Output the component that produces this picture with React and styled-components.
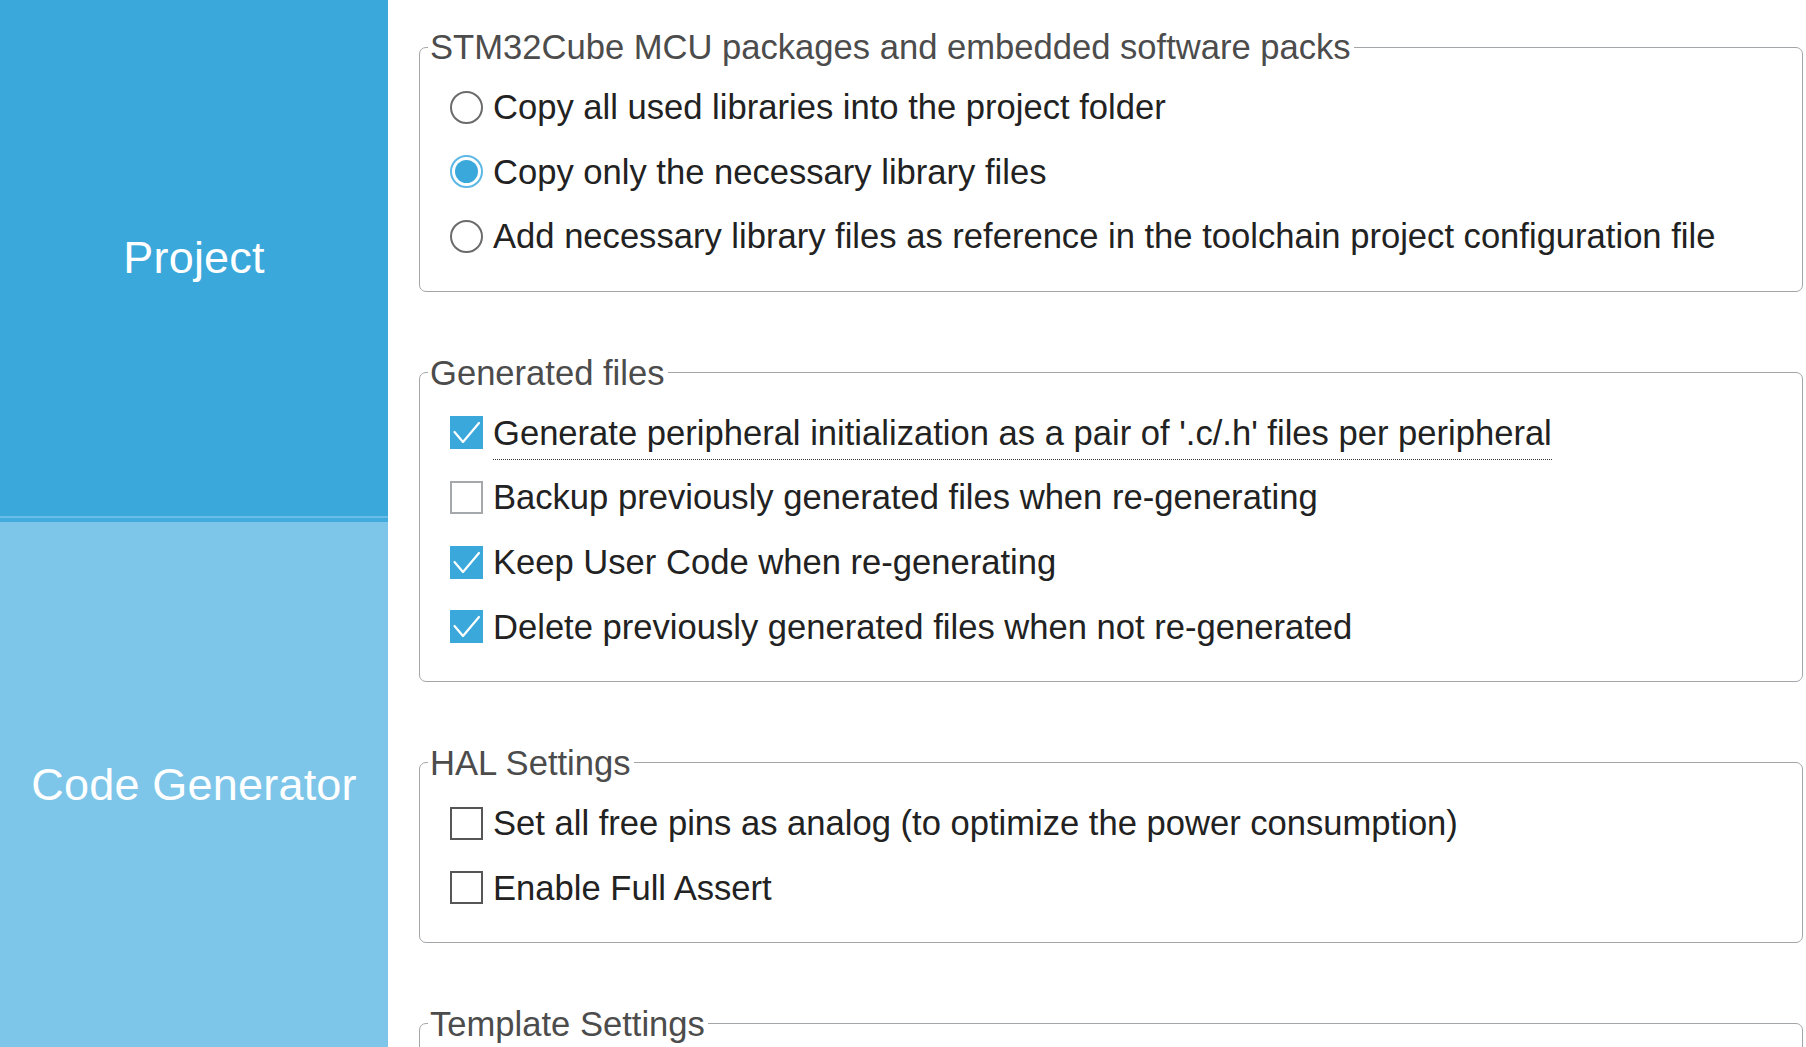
import React from "react";
import styled, { createGlobalStyle } from "styled-components";

const Global = createGlobalStyle`
  html, body { margin: 0; padding: 0; background: #fff; }
  body { font-family: "Liberation Sans", Arial, sans-serif; }
`;

const Page = styled.div`
  display: flex;
  width: 1806px;
  height: 1047px;
  overflow: hidden;
  background: #fff;
`;

const Sidebar = styled.nav`
  width: 388px;
  flex: 0 0 388px;
  display: flex;
  flex-direction: column;
  background: #7dc6ea;
`;

const Tile = styled.div`
  height: ${(p) => p.$h}px;
  flex: 0 0 auto;
  display: flex;
  align-items: center;
  justify-content: center;
  color: #fff;
  font-size: 45px;
  letter-spacing: 0.2px;
  box-sizing: border-box;
  padding-bottom: ${(p) => (p.$active ? 6 : 0)}px;
  background: ${(p) =>
    p.$active
      ? "linear-gradient(to bottom, #3aa8db 0 516px, #69bde6 516px 518px, #42abde 518px 522px)"
      : "#7dc6ea"};
`;

const Main = styled.main`
  flex: 1;
  padding: 27px 3px 0 31px;
  display: flex;
  flex-direction: column;
  gap: 60.8px;
  min-width: 0;
`;

const Group = styled.fieldset`
  margin: 0;
  border: 1.5px solid #a3a6a9;
  border-radius: 7px;
  padding: 8px 0 22px 0;
  min-width: 0;
`;

const Legend = styled.legend`
  margin-left: 8px;
  padding: 0 3px 0 2px;
  font-size: 34.6px;
  line-height: 40px;
  color: #4c4c4c;
`;

const Rows = styled.div`
  display: flex;
  flex-direction: column;
  padding-left: 30px;
`;

const Row = styled.label`
  display: flex;
  align-items: center;
  height: 64.6px;
  gap: 10px;
  font-size: 34.6px;
  color: #222;
  white-space: nowrap;
`;

const Text = styled.span`
  line-height: 40px;
  ${(p) =>
    p.$dotted
      ? `border-bottom: 1.5px dotted #333; padding: 7.5px 0 6px;`
      : ""}
`;

const RadioCircle = styled.span`
  width: 33px;
  height: 33px;
  flex: 0 0 33px;
  box-sizing: border-box;
  border-radius: 50%;
  border: 2px solid ${(p) => (p.$on ? "#5db8e6" : "#6b6b6b")};
  background: #fff;
  display: flex;
  align-items: center;
  justify-content: center;
  &::after {
    content: "";
    display: ${(p) => (p.$on ? "block" : "none")};
    width: 23px;
    height: 23px;
    border-radius: 50%;
    background: #3aa8db;
  }
`;

const Box = styled.span`
  width: 33px;
  height: 33px;
  flex: 0 0 33px;
  box-sizing: border-box;
  background: ${(p) => (p.$on ? "#3aa8db" : "#fff")};
  border: ${(p) => (p.$on ? "none" : `2px solid ${p.$light ? "#a6a9ac" : "#565656"}`)};
  display: flex;
  align-items: center;
  justify-content: center;
`;

function Radio({ on, children }) {
  return (
    <Row>
      <RadioCircle $on={on} />
      <Text>{children}</Text>
    </Row>
  );
}

function Check({ on, light, dotted, children }) {
  return (
    <Row>
      <Box $on={on} $light={light}>
        {on && (
          <svg width="33" height="33" viewBox="0 0 33 33">
            <polyline
              points="4.5,16 13,26 29,7"
              fill="none"
              stroke="#fff"
              strokeWidth="2.2"
              strokeLinecap="round"
              strokeLinejoin="round"
            />
          </svg>
        )}
      </Box>
      <Text $dotted={dotted}>{children}</Text>
    </Row>
  );
}

export default function App() {
  return (
    <>
      <Global />
      <Page>
        <Sidebar>
          <Tile $active $h={522}>Project</Tile>
          <Tile $h={525}>Code Generator</Tile>
        </Sidebar>
        <Main>
          <Group>
            <Legend>STM32Cube MCU packages and embedded software packs</Legend>
            <Rows>
              <Radio>Copy all used libraries into the project folder</Radio>
              <Radio on>Copy only the necessary library files</Radio>
              <Radio>
                Add necessary library files as reference in the toolchain project configuration file
              </Radio>
            </Rows>
          </Group>
          <Group>
            <Legend>Generated files</Legend>
            <Rows>
              <Check on dotted>
                Generate peripheral initialization as a pair of '.c/.h' files per peripheral
              </Check>
              <Check light>Backup previously generated files when re-generating</Check>
              <Check on>Keep User Code when re-generating</Check>
              <Check on>Delete previously generated files when not re-generated</Check>
            </Rows>
          </Group>
          <Group>
            <Legend>HAL Settings</Legend>
            <Rows>
              <Check>Set all free pins as analog (to optimize the power consumption)</Check>
              <Check>Enable Full Assert</Check>
            </Rows>
          </Group>
          <Group>
            <Legend>Template Settings</Legend>
            <Rows>
              <Row />
            </Rows>
          </Group>
        </Main>
      </Page>
    </>
  );
}
